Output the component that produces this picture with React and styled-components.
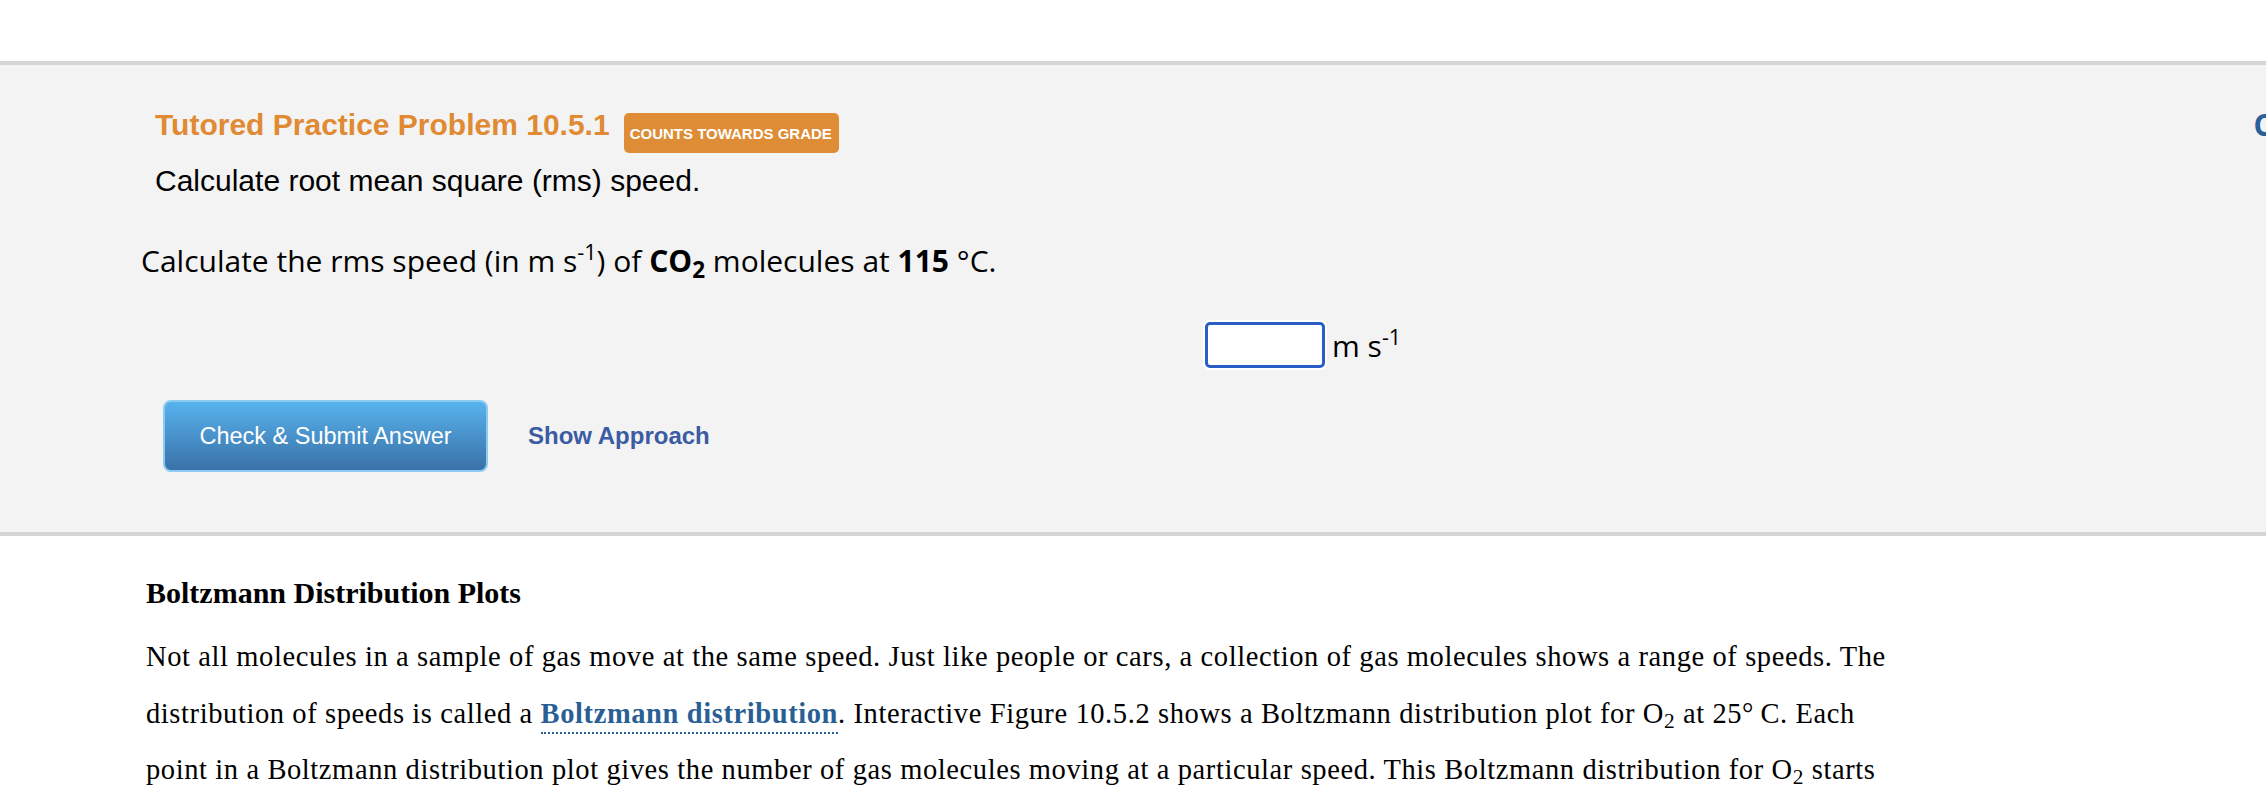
import React from "react";
import styled, { createGlobalStyle } from "styled-components";

const GlobalStyle = createGlobalStyle`
  html, body {
    margin: 0;
    padding: 0;
    background: #fff;
    overflow: hidden;
  }
  body {
    font-family: "Liberation Sans", Arial, sans-serif;
  }
`;

const Page = styled.div`
  width: 100%;
  padding-top: 61px;
  overflow: hidden;
`;

const ProblemPanel = styled.section`
  background: #f3f3f3;
  border-top: 4px solid #d5d5d5;
  border-bottom: 4px solid #d5d5d5;
  padding: 45px 0 60px 141px;
`;

const HeaderRow = styled.div`
  display: flex;
  align-items: flex-start;
  justify-content: space-between;
  padding-left: 14px;
`;

const TitleGroup = styled.div`
  display: flex;
  align-items: flex-start;
  gap: 14px;
`;

const Title = styled.h1`
  margin: 0;
  font: bold 30px/30px "Liberation Sans", Arial, sans-serif;
  color: #e08a33;
`;

const Badge = styled.span`
  margin-top: 3px;
  height: 40px;
  display: inline-flex;
  align-items: center;
  padding: 0 7px 0 6px;
  background: #de8c35;
  border-radius: 5px;
  color: #fff;
  font: bold 15px "Liberation Sans", Arial, sans-serif;
`;

const CornerLink = styled.a`
  font: bold 30px/30px "Open Sans", sans-serif;
  color: #2a6099;
  text-decoration: none;
  margin-right: -67px;
  white-space: nowrap;
`;

const Subtitle = styled.p`
  margin: 11px 0 0 14px;
  font: 30px/33px "Liberation Sans", Arial, sans-serif;
  color: #000;
`;

const Question = styled.p`
  margin: 43px 0 0;
  font: 30px/41px "Open Sans", sans-serif;
  color: #000;
`;

const Sup = styled.sup`
  font-size: 0.72em;
  line-height: 0;
  vertical-align: 0.55em;
`;

const Sub = styled.sub`
  font-size: 0.75em;
  line-height: 0;
  vertical-align: -0.25em;
`;

const AnswerRow = styled.div`
  display: flex;
  align-items: center;
  gap: 7px;
  margin-top: 41px;
  padding-left: 1064px;
`;

const AnswerInput = styled.input`
  width: 120px;
  height: 46px;
  box-sizing: border-box;
  border: 3px solid #2a5ec6;
  border-radius: 5px;
  box-shadow: 0 0 0 2px #fff;
  background: #fff;
  outline: none;
`;

const Unit = styled.span`
  font: 30px/41px "Open Sans", sans-serif;
  color: #000;
`;

const ButtonRow = styled.div`
  display: flex;
  align-items: center;
  gap: 40px;
  margin-top: 32px;
  padding-left: 22px;
`;

const SubmitButton = styled.button`
  width: 325px;
  height: 72px;
  box-sizing: border-box;
  border: 2px solid #8ccbf1;
  border-radius: 8px;
  background: linear-gradient(#57b2ed, #3a71a8);
  color: #fff;
  font: 23.5px "Liberation Sans", Arial, sans-serif;
  padding: 0;
  cursor: pointer;
`;

const ApproachLink = styled.a`
  font: bold 24px "Liberation Sans", Arial, sans-serif;
  color: #3b5ba3;
  text-decoration: none;
`;

const Reading = styled.section`
  padding: 40px 0 0 146px;
`;

const Heading = styled.h2`
  margin: 0 0 19px;
  font: bold 30px/34px "Liberation Serif", "Times New Roman", serif;
  color: #000;
`;

const Body = styled.p`
  margin: 0;
  width: 1745px;
  font: 28.5px/56.5px "Liberation Serif", "Times New Roman", serif;
  letter-spacing: 0.6px;
  color: #000;
`;

const Term = styled.a`
  font-weight: bold;
  color: #2a5f96;
  text-decoration: none;
  border-bottom: 2px dotted #2a5f96;
  padding-bottom: 3px;
`;

export default function App() {
  return (
    <Page>
      <GlobalStyle />
      <ProblemPanel>
        <HeaderRow>
          <TitleGroup>
            <Title>Tutored Practice Problem 10.5.1</Title>
            <Badge>COUNTS TOWARDS GRADE</Badge>
          </TitleGroup>
          <CornerLink href="#">Close</CornerLink>
        </HeaderRow>
        <Subtitle>Calculate root mean square (rms) speed.</Subtitle>
        <Question>
          Calculate the rms speed (in m s<Sup>-1</Sup>) of{" "}
          <b>
            CO<Sub>2</Sub>
          </b>{" "}
          molecules at <b>115</b> °C.
        </Question>
        <AnswerRow>
          <AnswerInput type="text" aria-label="rms speed" />
          <Unit>
            m s<Sup>-1</Sup>
          </Unit>
        </AnswerRow>
        <ButtonRow>
          <SubmitButton>Check &amp; Submit Answer</SubmitButton>
          <ApproachLink href="#">Show Approach</ApproachLink>
        </ButtonRow>
      </ProblemPanel>
      <Reading>
        <Heading>Boltzmann Distribution Plots</Heading>
        <Body>
          Not all molecules in a sample of gas move at the same speed. Just like people or cars, a
          collection of gas molecules shows a range of speeds. The distribution of speeds is called a{" "}
          <Term href="#">Boltzmann distribution</Term>. Interactive Figure 10.5.2 shows a Boltzmann
          distribution plot for O<Sub>2</Sub> at 25°&#8201;C. Each point in a Boltzmann distribution plot
          gives the number of gas molecules moving at a particular speed. This Boltzmann distribution for
          O<Sub>2</Sub> starts at zero, rises to a maximum at about 400 m/s, and then falls off toward zero
          at higher speeds.
        </Body>
      </Reading>
    </Page>
  );
}
